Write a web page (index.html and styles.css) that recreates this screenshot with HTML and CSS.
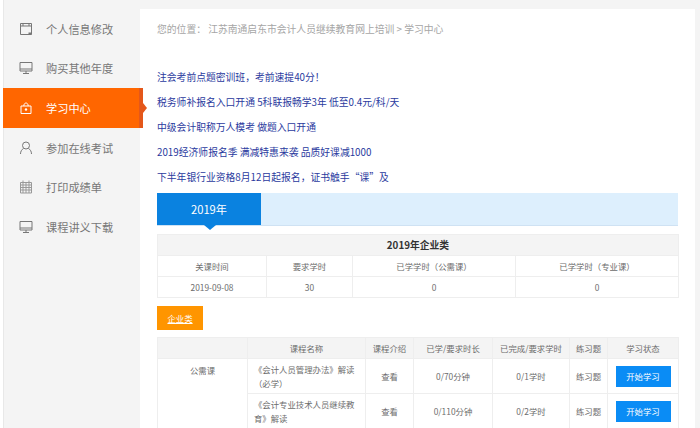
FILE: index.html
```html
<!DOCTYPE html>
<html lang="zh-CN">
<head>
<meta charset="utf-8">
<title>学习中心</title>
<link rel="stylesheet" href="styles.css">
</head>
<body>
<div class="shell">
  <nav class="side">
    <a class="item">
      <svg class="ico" viewBox="0 0 14 14"><path d="M1.500 1.500h11v11h-11zM1.500 4h11M4 1.500v2.500M10 1.500v2.500"/><path class="fill" d="M9.500 10.500h3v2h-3z"/></svg>
      <span>个人信息修改</span>
    </a>
    <a class="item">
      <svg class="ico" viewBox="0 0 14 14"><path d="M1 1.500h12v8.500h-12zM1 8h12M7 10v2.500M4 12.500h6"/></svg>
      <span>购买其他年度</span>
    </a>
    <a class="item active">
      <svg class="ico" viewBox="0 0 14 14"><path d="M2 5h10v7.500h-10zM4.800 5c0-4 4.400-4 4.400 0"/><circle class="fill" cx="7" cy="8.500" r="1.200"/></svg>
      <span>学习中心</span>
    </a>
    <a class="item">
      <svg class="ico" viewBox="0 0 14 14"><circle cx="7" cy="4.500" r="3.500"/><path d="M4.500 7.500c-1.800 1-3 3-3 5.500M9.500 7.500c1.800 1 3 3 3 5.500"/></svg>
      <span>参加在线考试</span>
    </a>
    <a class="item">
      <svg class="ico thin" viewBox="0 0 14 14"><path d="M1.500 2.500h11v10.500h-11zM1.500 5h11M1.500 7.500h11M1.500 10h11M4 .5v12.500M7 2.500v10.500M10 .5v12.500"/></svg>
      <span>打印成绩单</span>
    </a>
    <a class="item">
      <svg class="ico" viewBox="0 0 14 14"><path d="M1 1.500h12v8.500h-12zM1 8h12M7 10v2.500M4 12.500h6"/></svg>
      <span>课程讲义下载</span>
    </a>
  </nav>
  <main class="main">
    <div class="crumb">您的位置： <span class="crumb-path">江苏南通启东市会计人员继续教育网上培训 &gt; 学习中心</span></div>
    <ul class="news">
      <li>注会考前点题密训班，考前速提40分！</li>
      <li>税务师补报名入口开通 5科联报畅学3年 低至0.4元/科/天</li>
      <li>中级会计职称万人模考 做题入口开通</li>
      <li>2019经济师报名季 满减特惠来袭 品质好课减1000</li>
      <li>下半年银行业资格8月12日起报名，证书触手“课”及</li>
    </ul>
    <div class="yearbar"><div class="year">2019年</div></div>
    <table class="tbl summary">
      <colgroup><col class="s1"><col class="s2"><col class="s3"><col class="s4"></colgroup>
      <tr><th class="title" colspan="4">2019年企业类</th></tr>
      <tr class="r21"><td>关课时间</td><td>要求学时</td><td>已学学时（公需课）</td><td>已学学时（专业课）</td></tr>
      <tr class="r21"><td>2019-09-08</td><td>30</td><td>0</td><td>0</td></tr>
    </table>
    <a class="cat">企业类</a>
    <table class="tbl courses">
      <colgroup><col class="c1"><col class="c2"><col class="c3"><col class="c4"><col class="c5"><col class="c6"><col class="c7"></colgroup>
      <tr class="head"><th></th><th>课程名称</th><th>课程介绍</th><th>已学/要求时长</th><th>已完成/要求学时</th><th>练习题</th><th>学习状态</th></tr>
      <tr class="row">
        <td class="type" rowspan="2">公需课</td>
        <td class="name">《会计人员管理办法》解读（必学）</td>
        <td>查看</td><td>0/70分钟</td><td>0/1学时</td><td>练习题</td>
        <td><a class="start">开始学习</a></td>
      </tr>
      <tr class="row">
        <td class="name">《会计专业技术人员继续教育》解读</td>
        <td>查看</td><td>0/110分钟</td><td>0/2学时</td><td>练习题</td>
        <td><a class="start">开始学习</a></td>
      </tr>
    </table>
  </main>
</div>
</body>
</html>
```

FILE: styles.css
```css
* { box-sizing: border-box; }
html, body { margin: 0; height: 428px; overflow: hidden; background: #fff; }
body {
  font-family: "Noto Sans CJK SC", "Noto Sans", sans-serif;
  font-size: 9.800px;
  color: #6c6c6c;
}
.shell {
  display: flex;
  height: 428px;
  margin-left: 3px;
  padding: 9px 5px 0 0;
  background: #f4f4f4;
  border-left: 1px solid #e8e8e8;
}
.side { width: 136px; flex: none; }
.item {
  display: flex;
  align-items: center;
  gap: 13px;
  height: 39.6px;
  padding-left: 15px;
  font-size: 11.200px;
  color: #777;
  position: relative;
  width: 136px;
}
.item.active {
  background: #ff6600;
  border-right: 4px solid #e4571a;
  color: #fff;
  margin-left: -1px;
  width: 140px;
  padding-left: 16px;
  z-index: 1;
}
.item.active::after {
  content: "";
  position: absolute;
  right: -8px;
  top: 15px;
  border-left: 4px solid #e4571a;
  border-top: 5px solid transparent;
  border-bottom: 5px solid transparent;
}
.ico {
  width: 14px;
  height: 14px;
  flex: none;
  fill: none;
  stroke: #777;
  stroke-width: 1;
}
.ico.thin { stroke: #999; }
.ico .fill { fill: #777; stroke: none; }
.active .ico { stroke: #fff; }
.active .ico .fill { fill: #fff; }
.main {
  flex: 1;
  background: #fff;
  padding: 0 17px;
  min-width: 0;
}
.crumb {
  height: 40px;
  line-height: 40px;
  color: #a6a6a6;
}
.news {
  list-style: none;
  margin: 16px 0 0;
  padding: 0;
  color: #2a3a9e;
}
.news li { height: 25px; line-height: 25px; white-space: nowrap; }
.yearbar {
  height: 33px;
  margin-top: 3px;
  background: #ddeffd;
  border-bottom: 1px solid #cfe2f3;
}
.year {
  position: relative;
  width: 104px;
  height: 32px;
  background: #0a82e0;
  color: #fff;
  font-size: 11.200px;
  line-height: 32px;
  text-align: center;
}
.year::after {
  content: "";
  position: absolute;
  left: 47px;
  top: 32px;
  border-top: 5px solid #0a82e0;
  border-left: 6px solid transparent;
  border-right: 6px solid transparent;
}
.tbl {
  width: 521px;
  border-collapse: collapse;
  table-layout: fixed;
  text-align: center;
  font-size: 8.400px;
}
.tbl th, .tbl td {
  border: 1px solid #eee;
  padding: 0;
  font-weight: normal;
}
.summary { margin-top: 8px; }
.s1 { width: 109px; }
.s2 { width: 86px; }
.s3 { width: 163px; }
.s4 { width: 163px; }
.tbl .title {
  height: 21px;
  background: #f4f4f4;
  color: #333;
  font-size: 9.800px;
  font-weight: bold;
}
.r21 td { height: 21px; }
.cat {
  display: block;
  width: 46px;
  height: 24px;
  margin-top: 8px;
  background: #ff9500;
  color: #fff;
  font-size: 8.400px;
  line-height: 24px;
  text-align: center;
  text-decoration: underline;
}
.courses { margin-top: 7px; }
.c1 { width: 90px; }
.c2 { width: 118px; }
.c3 { width: 48px; }
.c4 { width: 79px; }
.c5 { width: 77px; }
.c6 { width: 38px; }
.c7 { width: 71px; }
.head th { height: 21px; background: #f4f4f4; }
.row td { height: 35px; }
.tbl td.type { vertical-align: top; padding-top: 5px; }
.tbl td.name { text-align: left; padding: 0 6px; line-height: 14.500px; }
.start {
  display: block;
  width: 55px;
  height: 21px;
  margin: 0 auto;
  background: #0a8cf5;
  color: #fff;
  line-height: 21px;
}
```
